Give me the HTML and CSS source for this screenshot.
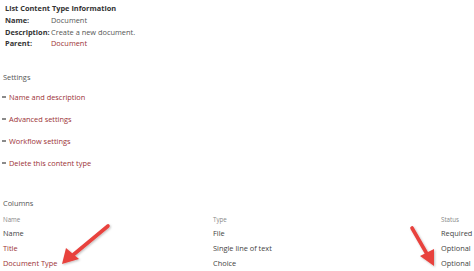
FILE: index.html
```html
<!DOCTYPE html>
<html>
<head>
<meta charset="utf-8">
<link rel="stylesheet" href="styles.css">
</head>
<body>
<div class="page">
  <section class="info">
    <div class="info-title">List Content Type Information</div>
    <div class="info-row"><span class="info-label">Name:</span><span class="info-value">Document</span></div>
    <div class="info-row"><span class="info-label">Description:</span><span class="info-value">Create a new document.</span></div>
    <div class="info-row"><span class="info-label">Parent:</span><span class="info-value link">Document</span></div>
  </section>

  <section class="settings">
    <div class="section-title">Settings</div>
    <ul class="settings-list">
      <li class="link">Name and description</li>
      <li class="link">Advanced settings</li>
      <li class="link">Workflow settings</li>
      <li class="link">Delete this content type</li>
    </ul>
  </section>

  <section class="columns">
    <div class="section-title">Columns</div>
    <div class="grid">
      <div class="row head"><span>Name</span><span>Type</span><span>Status</span></div>
      <div class="row"><span>Name</span><span>File</span><span>Required</span></div>
      <div class="row"><span class="link">Title</span><span>Single line of text</span><span>Optional</span></div>
      <div class="row"><span class="link">Document Type</span><span>Choice</span><span>Optional</span></div>
    </div>
  </section>

  <svg class="arrows" width="474" height="271" viewBox="0 0 474 271">
    <defs>
      <filter id="sh" x="-20%" y="-20%" width="140%" height="140%">
        <feDropShadow dx="1" dy="1" stdDeviation="1" flood-color="#000" flood-opacity="0.25"/>
      </filter>
    </defs>
    <g filter="url(#sh)" fill="#e8423e" stroke="none">
      <line x1="108" y1="226" x2="73" y2="255" stroke="#e8423e" stroke-width="3.6" stroke-linecap="round"/>
      <polygon points="62,264 66,248 79,259"/>
      <line x1="412" y1="228" x2="427" y2="254" stroke="#e8423e" stroke-width="3.6" stroke-linecap="round"/>
      <polygon points="434,266 420,256 434,249"/>
    </g>
  </svg>
</div>
</body>
</html>
```
FILE: styles.css
```css
html, body {
  margin: 0;
  padding: 0;
  background: #fff;
}
.page {
  position: relative;
  width: 474px;
  height: 271px;
  overflow: hidden;
  font-family: "Open Sans", "Noto Sans", sans-serif;
  font-size: 7.4px;
  color: #444;
}
.info {
  padding: 2px 0 0 5px;
}
.info-title {
  font-weight: 700;
  color: #333;
  line-height: 12px;
  margin-bottom: 1px;
}
.info-row {
  display: flex;
  line-height: 11.5px;
}
.info-label {
  width: 46px;
  font-weight: 700;
  color: #333;
}
.info-value {
  color: #555;
}
.link,
.info-value.link {
  color: #9c3236;
}
.settings {
  padding: 21px 0 0 3px;
}
.section-title {
  color: #555;
  line-height: 12px;
}
.settings-list {
  list-style: none;
  margin: 8px 0 0 0;
  padding: 0;
  display: flex;
  flex-direction: column;
  gap: 10px;
}
.settings-list li {
  display: flex;
  align-items: center;
  gap: 3px;
  line-height: 12px;
  margin-left: -1px;
}
.settings-list li::before {
  content: "";
  width: 4px;
  height: 2px;
  background: #8a8a8a;
}
.columns {
  padding: 28px 0 0 3px;
}
.grid {
  margin-top: 4px;
  display: flex;
  flex-direction: column;
}
.row {
  display: grid;
  grid-template-columns: 210px 228px 1fr;
  line-height: 15px;
}
.row.head {
  font-size: 6.2px;
  color: #888;
  line-height: 13px;
}
.arrows {
  position: absolute;
  left: 0;
  top: 0;
  pointer-events: none;
}
```
